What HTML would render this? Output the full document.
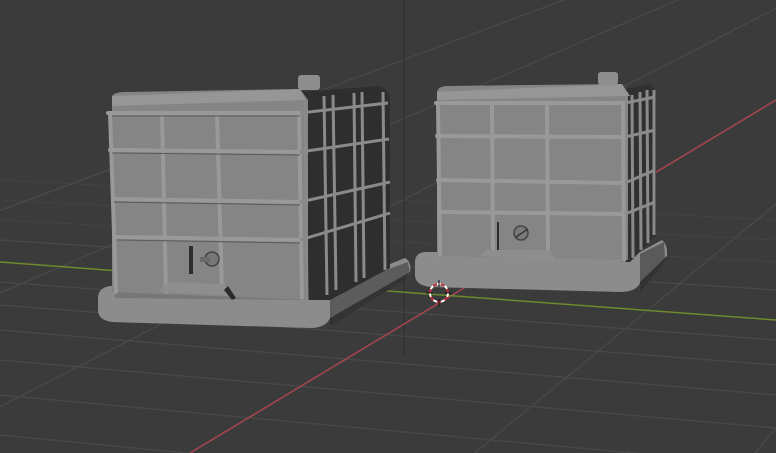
<!DOCTYPE html>
<html><head><meta charset="utf-8"><style>html,body{margin:0;padding:0;background:#3b3b3b;overflow:hidden;width:776px;height:453px}svg{display:block}</style></head>
<body>
<svg width="776" height="453" viewBox="0 0 776 453" xmlns="http://www.w3.org/2000/svg">
<rect width="776" height="453" fill="#3b3b3b"/>
<g stroke="#424242" stroke-width="1" fill="none">
<line x1="0" y1="180" x2="776" y2="220"/>
<line x1="0" y1="200" x2="776" y2="240"/>
<line x1="0" y1="220" x2="776" y2="262"/>
</g>
<g stroke="#4a4a4a" stroke-width="1.2" fill="none">
<line x1="0" y1="240" x2="776" y2="290"/>
<line x1="0" y1="282" x2="776" y2="340"/>
<line x1="0" y1="305" x2="776" y2="365"/>
<line x1="0" y1="330" x2="776" y2="395"/>
<line x1="0" y1="360" x2="776" y2="428"/>
<line x1="0" y1="395" x2="776" y2="466"/>
<line x1="0" y1="435" x2="776" y2="510"/>
<line x1="-90" y1="453" x2="1400" y2="-312"/>
<line x1="-370" y1="453" x2="1400" y2="-312"/>
<line x1="475" y1="453" x2="1400" y2="-312"/>
<line x1="755" y1="453" x2="1400" y2="-312"/>
<line x1="1035" y1="453" x2="1400" y2="-312"/>
<line x1="-650" y1="453" x2="1400" y2="-312"/>
</g>
<line x1="404" y1="0" x2="404" y2="355" stroke="#2c2c2c" stroke-width="1"/>
<line x1="190" y1="453" x2="776" y2="100" stroke="#a84650" stroke-width="1.5"/>
<line x1="0" y1="262" x2="776" y2="320" stroke="#6d8a2e" stroke-width="1.5"/>

<!-- LEFT TANK -->
<g>
<path d="M98 298 Q98 288 110 286 L330 288 L405 258 Q412 262 410 272 L330 318 Q326 328 310 328 L112 322 Q98 320 98 310Z" fill="#8c8c8c"/>
<path d="M330 290 L408 262 L410 274 L330 318Z" fill="#5c5c5c"/>
<path d="M330 318 L410 272 L405 280 L330 326Z" fill="#333"/>
<path d="M115 292 L300 296 L300 300 L115 298Z" fill="#777"/>
<path d="M300 92 L380 86 Q390 90 390 100 L390 268 L330 300 L300 300Z" fill="#2e2e2e"/>
<path d="M112 96 Q115 92 125 92 L300 89 L308 100 L308 300 L112 292Z" fill="#858585"/>
<path d="M112 96 L300 89 L305 100 L112 106Z" fill="#969696"/>
<rect x="298" y="75" width="22" height="15" rx="3" fill="#8e8e8e"/>
<g stroke="#999" stroke-width="4" fill="none" stroke-linecap="round">
<line x1="108" y1="113" x2="300" y2="113"/>
<line x1="110" y1="150" x2="300" y2="152"/>
<line x1="113" y1="199" x2="300" y2="202"/>
<line x1="116" y1="237" x2="300" y2="240"/>
<line x1="110" y1="113" x2="116" y2="292"/>
<line x1="162" y1="113" x2="166" y2="292"/>
<line x1="217" y1="113" x2="222" y2="292"/>
<line x1="299" y1="113" x2="302" y2="298"/>
</g>
<g stroke="#8a8a8a" stroke-width="3" fill="none">
<line x1="300" y1="113" x2="388" y2="103"/>
<line x1="300" y1="152" x2="389" y2="139"/>
<line x1="300" y1="202" x2="390" y2="182"/>
<line x1="300" y1="240" x2="390" y2="213"/>
<line x1="305" y1="100" x2="307" y2="300"/>
<line x1="324" y1="96" x2="327" y2="295"/>
<line x1="333" y1="95" x2="336" y2="290"/>
<line x1="354" y1="93" x2="356" y2="282"/>
<line x1="362" y1="92" x2="364" y2="278"/>
<line x1="383" y1="92" x2="385" y2="270"/>
</g>
<g stroke="#5a5a5a" stroke-width="1" fill="none">
<line x1="112" y1="116" x2="300" y2="116"/>
<line x1="112" y1="153" x2="300" y2="155"/>
<line x1="114" y1="202" x2="300" y2="205"/>
<line x1="117" y1="240" x2="300" y2="243"/>
</g>
<path d="M158 292 L168 282 L225 284 L232 296Z" fill="#8e8e8e"/>
<path d="M228 286 L236 298 L232 300 L224 290Z" fill="#2a2a2a"/>
<rect x="189" y="246" width="4" height="28" fill="#2e2e2e"/>
<circle cx="212" cy="259" r="7" fill="#777" stroke="#444" stroke-width="1.5"/>
<rect x="200" y="257" width="10" height="5" fill="#6a6a6a"/>
</g>

<!-- RIGHT TANK -->
<g>
<path d="M415 262 Q415 253 425 252 L640 252 L662 240 Q668 245 667 256 L640 283 Q636 292 620 292 L430 287 Q415 285 415 275Z" fill="#8c8c8c"/>
<path d="M640 254 L664 242 L665 258 L640 284Z" fill="#5a5a5a"/>
<path d="M640 282 L667 256 L662 266 L640 292Z" fill="#333"/>
<path d="M622 90 L650 84 Q656 88 656 95 L656 235 L630 262 L622 262Z" fill="#303030"/>
<path d="M437 92 Q438 86 448 86 L622 84 L628 96 L628 260 L437 256Z" fill="#858585"/>
<path d="M437 92 L622 84 L630 96 L437 100Z" fill="#969696"/>
<rect x="598" y="72" width="20" height="13" rx="3" fill="#8e8e8e"/>
<g stroke="#999" stroke-width="4" fill="none" stroke-linecap="round">
<line x1="436" y1="103" x2="625" y2="103"/>
<line x1="437" y1="136" x2="625" y2="137"/>
<line x1="438" y1="180" x2="625" y2="183"/>
<line x1="439" y1="212" x2="625" y2="214"/>
<line x1="438" y1="103" x2="440" y2="255"/>
<line x1="492" y1="103" x2="493" y2="255"/>
<line x1="547" y1="103" x2="548" y2="256"/>
<line x1="623" y1="103" x2="624" y2="260"/>
</g>
<g stroke="#8a8a8a" stroke-width="3" fill="none">
<line x1="625" y1="103" x2="655" y2="97"/>
<line x1="625" y1="137" x2="655" y2="130"/>
<line x1="625" y1="183" x2="655" y2="170"/>
<line x1="625" y1="214" x2="655" y2="202"/>
<line x1="632" y1="95" x2="633" y2="258"/>
<line x1="640" y1="92" x2="641" y2="250"/>
<line x1="647" y1="90" x2="648" y2="243"/>
<line x1="654" y1="90" x2="654" y2="235"/>
</g>
<path d="M480 256 L486 250 L550 250 L556 260Z" fill="#8e8e8e"/>
<rect x="497" y="222" width="2" height="28" fill="#2e2e2e"/>
<circle cx="521" cy="233" r="7" fill="#7a7a7a" stroke="#444" stroke-width="1.5"/>
<line x1="516" y1="237" x2="528" y2="229" stroke="#333" stroke-width="1.5"/>
</g>

<!-- 3D cursor -->
<circle cx="439" cy="293" r="9" fill="none" stroke="#fff" stroke-width="2" stroke-dasharray="4 4"/>
<circle cx="439" cy="293" r="9" fill="none" stroke="#c8303a" stroke-width="2" stroke-dasharray="4 4" stroke-dashoffset="4"/>
<line x1="439" y1="280" x2="439" y2="287" stroke="#111" stroke-width="1"/>
<line x1="439" y1="299" x2="439" y2="306" stroke="#111" stroke-width="1"/>
<line x1="426" y1="293" x2="433" y2="293" stroke="#111" stroke-width="1"/>
<line x1="445" y1="293" x2="452" y2="293" stroke="#111" stroke-width="1"/>
</svg>
</body></html>
